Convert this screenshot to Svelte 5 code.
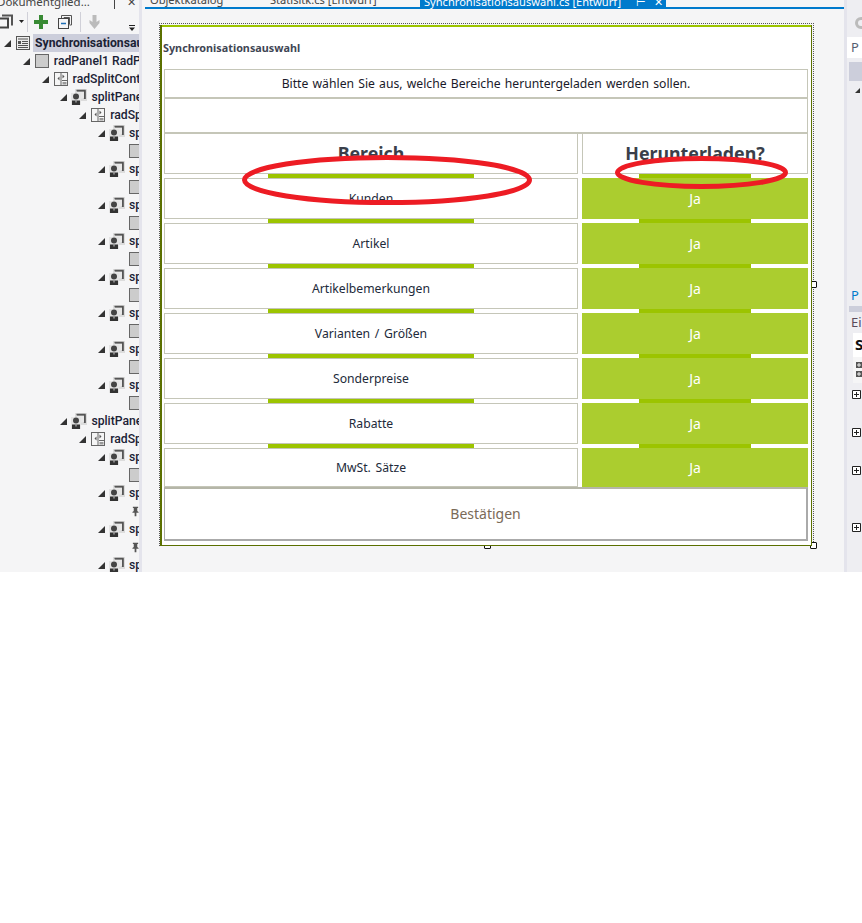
<script>
  const tree = [
    ['doc', 0, 'Synchronisationsauswahl', true],
    ['box', 1, 'radPanel1  RadPanel'],
    ['split', 2, 'radSplitContainer1'],
    ['pane', 3, 'splitPanel1'],
    ['split', 4, 'radSplitContainer2'],
    ['pane', 5, 'splitPanel3'], ['box', 6, ''],
    ['pane', 5, 'splitPanel4'], ['box', 6, ''],
    ['pane', 5, 'splitPanel5'], ['box', 6, ''],
    ['pane', 5, 'splitPanel6'], ['box', 6, ''],
    ['pane', 5, 'splitPanel7'], ['box', 6, ''],
    ['pane', 5, 'splitPanel8'], ['box', 6, ''],
    ['pane', 5, 'splitPanel9'], ['box', 6, ''],
    ['pane', 5, 'splitPanel10'], ['box', 6, ''],
    ['pane', 3, 'splitPanel2'],
    ['split', 4, 'radSplitContainer3'],
    ['pane', 5, 'splitPanel11'], ['box', 6, ''],
    ['pane', 5, 'splitPanel12'], ['pin', 6, ''],
    ['pane', 5, 'splitPanel13'], ['pin', 6, ''],
    ['pane', 5, 'splitPanel14']
  ];

  const areas = ['Kunden', 'Artikel', 'Artikelbemerkungen', 'Varianten / Größen', 'Sonderpreise', 'Rabatte', 'MwSt. Sätze'];
</script>

{#snippet icon(type)}
  {#if type === 'doc'}
    <svg width="14" height="14" viewBox="0 0 14 14">
      <rect x=".5" y=".5" width="13" height="13" fill="#eee" stroke="#555" />
      <path d="M2 3h10M6 5.500h6M6 7.500h6M2 9.500h10M2 11.500h10" stroke="#555" fill="none" />
      <rect x="2" y="5" width="3" height="3" fill="#555" />
    </svg>
  {:else if type === 'box'}
    <svg width="14" height="14" viewBox="0 0 14 14">
      <rect x=".5" y=".5" width="13" height="13" fill="#ccc" stroke="#666" />
    </svg>
  {:else if type === 'split'}
    <svg width="14" height="14" viewBox="0 0 14 14">
      <rect x=".5" y=".5" width="13" height="13" fill="#f5f5f5" stroke="#666" />
      <path d="M7 .5v13M8 8.500h5.500" stroke="#666" fill="none" />
      <path d="M5.500 4.500v4l-2-2zM8.500 2.500v4l2-2z" fill="#555" />
      <rect x="8.500" y="10" width="4" height="2.500" fill="#999" />
    </svg>
  {:else if type === 'pane'}
    <svg width="16" height="16" viewBox="0 0 16 16">
      <path d="M4 0h12v12H4z" fill="#dcdcdc" />
      <path d="M6 2.500h7.500V10" fill="none" stroke="#555" stroke-width="1.500" />
      <path d="M6 2.500h7v7H6z" fill="#e8e8e8" />
      <path d="M5.500 1.500h8.500v8.500" fill="none" stroke="#555" stroke-width="1.500" />
      <rect x="0" y="4" width="10" height="12" fill="#e4e4e4" />
      <circle cx="5" cy="7.500" r="3" fill="#444" />
      <path d="M1 16v-4.500h8V16z" fill="#333" />
      <path d="M5 11.500v2" stroke="#ccc" />
    </svg>
  {:else if type === 'pin'}
    <svg width="7" height="11" viewBox="0 0 8 11">
      <path d="M1 0h6v1.500H6V5l1.500 1v1H5v4H3V7H.5V6L2 5V1.500H1z" fill="#555" />
    </svg>
  {/if}
{/snippet}

{#snippet bar()}
  <svg class="plusbox" width="9" height="9" viewBox="0 0 9 9">
    <path d="M.5.500h8v8h-8zM2 4.500h5M4.500 2v5" fill="#fff" stroke="#222" />
  </svg>
{/snippet}

<div class="shell">
  <aside class="outline">
    <div class="paneltitle"><span>Dokumentglied...</span><b class="title-pin"></b><b class="title-close">✕</b></div>
    <div class="toolbar">
      <svg class="tool-first" width="17" height="16" viewBox="0 0 17 16">
        <path d="M4 1.500h10v10" fill="none" stroke="#555" stroke-width="2" />
        <rect x="1" y="4.500" width="9" height="9" fill="none" stroke="#444" stroke-width="2" />
      </svg>
      <svg class="caret" width="5" height="3" viewBox="0 0 5 3"><path d="M0 0h5L2.500 3z" fill="#222" /></svg>
      <i class="sep"></i>
      <svg class="plus" width="14" height="14" viewBox="0 0 14 14">
        <path d="M5 0h4v5h5v4H9v5H5V9H0V5h5z" fill="#388a34" />
      </svg>
      <svg class="collapse" width="14" height="14" viewBox="0 0 14 14">
        <path d="M3.500 3V.5h10v9.500h-2M6 3V2.500h5.500v7" fill="none" stroke="#555" />
        <rect x=".5" y="3.500" width="10" height="10" fill="#f5f5f7" stroke="#444" />
        <path d="M3 8.500h5" stroke="#1e6fb5" stroke-width="1.500" />
      </svg>
      <i class="sep sep-two"></i>
      <svg class="down" width="11" height="14" viewBox="0 0 11 14">
        <path d="M3.500 0h4v7l3-2v3l-5 6-5-6V5l3 2z" fill="#bbb" />
      </svg>
      <svg class="overflow" width="6" height="6" viewBox="0 0 6 6">
        <path d="M0 0h6v1H0zM0 2.500h6L3 6z" fill="#222" />
      </svg>
    </div>
    <div class="tree">
      {#each tree as [type, level, label, selected]}
        <div class="node" style="padding-left: {level * 18.8 + 4}px">
          <svg class="twist" class:hidden={level === 6} width="7" height="7" viewBox="0 0 7 7"><path d="M7 0v7H0z" fill="#333" /></svg>
          <span class="nodeicon">{@render icon(type)}</span>
          {#if label}<span class="nodelabel" class:selected>{label}</span>{/if}
        </div>
      {/each}
    </div>
  </aside>

  <main class="editor">
    <div class="tabs">
      <span class="tab first">Objektkatalog</span>
      <span class="tab second">Statisitk.cs [Entwurf]</span>
      <span class="tab active">Synchronisationsauswahl.cs [Entwurf]<b class="tab-pin">⊢</b><b>✕</b></span>
    </div>
    <div class="canvas">
      <div class="selection">
        <i class="handle right"></i>
        <i class="handle bottom"></i>
        <i class="handle corner"></i>
        <div class="form">
          <h1>Synchronisationsauswahl</h1>
          <div class="wide intro">Bitte wählen Sie aus, welche Bereiche heruntergeladen werden sollen.</div>
          <div class="wide spacer"></div>
          <div class="grid">
            <div class="head">Bereich</div>
            <div class="head">Herunterladen?</div>
            {#each areas as area, i}
              <div class="cell">
                <i class="slot area"></i>
                <div class="box" class:last={i === areas.length - 1}>{area}</div>
              </div>
              <div class="cell">
                <i class="slot answer"></i>
                <div class="box yes" class:last={i === areas.length - 1}>Ja</div>
              </div>
            {/each}
          </div>
          <div class="confirm">Bestätigen</div>

          <svg class="marks" width="650" height="60" viewBox="0 0 650 60">
            <ellipse cx="226" cy="24" rx="142.500" ry="22.500" />
            <ellipse cx="540.500" cy="16.500" rx="84" ry="14" />
          </svg>
        </div>
      </div>
    </div>
  </main>

  <aside class="side">
    <div class="side-top"><i class="search"></i></div>
    <div class="side-field">P</div>
    <div class="side-selected"></div>
    <svg class="side-twist" width="5" height="5" viewBox="0 0 5 5"><path d="M5 0v5H0z" fill="#333" /></svg>
    <div class="side-link">P</div>
    <div class="side-strip"></div>
    <div class="side-ei">Ei</div>
    <div class="side-head">S</div>
    <div class="side-tools">
      <svg width="6" height="6" viewBox="0 0 6 6"><path d="M0 0h6v6H0z" fill="#555" /><path d="M1 3h4M3 1v4" stroke="#eee" /></svg>
      <svg width="6" height="6" viewBox="0 0 6 6"><path d="M0 0h6v6H0z" fill="#555" /><path d="M1 3h4M3 1v4" stroke="#eee" /></svg>
    </div>
    <div class="side-groups">
      <div class="grp" style="height: 38px">{@render bar()}</div>
      <div class="grp" style="height: 38px">{@render bar()}</div>
      <div class="grp" style="height: 57px">{@render bar()}</div>
      <div class="grp">{@render bar()}</div>
    </div>
  </aside>
</div>

<style>
  :global(body) {
    background: #fff;
  }

  .shell {
    display: flex;
    height: 572px;
    overflow: hidden;
    background: #f5f5f6;
    font-family: "Noto Sans", "Open Sans", sans-serif;
    color: #1e1e1e;
  }

  .outline {
    flex: none;
    width: 139px;
    margin-right: 3px;
    border-right: 3px solid #e4e4ec;
    box-sizing: content-box;
    overflow: hidden;
  }

  .paneltitle {
    height: 9px;
    overflow: hidden;
    display: flex;
    align-items: flex-end;
    font-size: 11.5px;
    line-height: 15px;
    color: #444;
  }

  .paneltitle span {
    margin-left: -3px;
    white-space: nowrap;
  }

  .title-pin {
    flex: none;
    width: 1px;
    height: 9px;
    margin-left: 24px;
    background: #444;
  }

  .title-close {
    margin-left: 12px;
    font-weight: 400;
    font-size: 11px;
  }

  .toolbar {
    height: 25px;
    display: flex;
    align-items: center;
  }

  .tool-first {
    margin-left: -2px;
  }

  .caret {
    margin-left: 4px;
  }

  .sep {
    width: 1px;
    height: 20px;
    background: #d0d0d8;
    margin-left: 3px;
  }

  .plus {
    margin-left: 6px;
  }

  .collapse {
    margin-left: 10px;
  }

  .sep-two {
    margin-left: 8px;
  }

  .down {
    margin-left: 8px;
  }

  .overflow {
    margin-left: auto;
    margin-right: 4px;
    align-self: flex-end;
    margin-bottom: 3px;
  }

  .tree {
    display: flex;
    flex-direction: column;
  }

  .node {
    height: 18px;
    display: flex;
    align-items: center;
    white-space: nowrap;
    font-family: Roboto, "Noto Sans", sans-serif;
    font-size: 12.2px;
    font-weight: 500;
    color: #1b2235;
  }

  .twist {
    flex: none;
    width: 7px;
    margin-right: 4px;
  }

  .twist.hidden {
    visibility: hidden;
  }

  .nodeicon {
    flex: none;
    display: flex;
    width: 16px;
    justify-content: center;
    margin-right: 2px;
  }

  .nodelabel {
    padding: 0 2px;
    line-height: 18px;
  }

  .nodelabel.selected {
    background: #cccedb;
    flex: 1;
    font-weight: 700;
  }

  .editor {
    flex: none;
    width: 699px;
    display: flex;
    flex-direction: column;
  }

  .tabs {
    height: 9px;
    display: flex;
    align-items: flex-end;
    background: linear-gradient(#f5f5f6 7px, #007acc 7px);
    overflow: hidden;
    font-size: 11.1px;
    line-height: 15px;
  }

  .tab {
    white-space: nowrap;
    padding-left: 4px;
    height: 9px;
    display: flex;
    align-items: flex-end;
    overflow: hidden;
    color: #444;
    box-sizing: border-box;
    padding-bottom: 2px;
  }

  .tab.first {
    width: 121px;
    padding-left: 5px;
  }

  .tab.second {
    width: 154px;
  }

  .tab.active {
    width: 246px;
    background: #007acc;
    color: #fff;
    padding-bottom: 0;
  }

  .tab b {
    font-weight: 400;
    margin-left: 8px;
    font-size: 11px;
  }

  .tab b.tab-pin {
    margin-left: 15px;
  }

  .canvas {
    flex: 1;
    padding: 14px 0 0 14px;
  }

  .selection {
    position: relative;
    width: 655px;
    height: 523px;
    box-sizing: border-box;
    border: 1px dotted #555;
    background: #f5f5f6;
  }

  .handle {
    position: absolute;
    width: 5px;
    height: 5px;
    background: #fff;
    border: 1px solid #111;
    border-radius: 1px;
  }

  .handle.right {
    right: -4px;
    top: 257px;
  }

  .handle.bottom {
    left: 324px;
    bottom: -4px;
  }

  .handle.corner {
    right: -4px;
    bottom: -4px;
  }

  .form {
    position: relative;
    box-sizing: border-box;
    height: 521px;
    margin-top: 1px;
    border: 1px solid #5b7000;
    border-top: 0;
    background: #fff;
    padding: 0 2px;
    width: 652px;
    border-left-width: 2px;
    box-shadow: inset 0 2px 0 #9cc400;
  }

  h1 {
    margin: 0;
    padding-top: 15px;
    height: 29px;
    font-size: 10.8px;
    line-height: 15px;
    font-weight: 700;
    color: #3f4654;
    white-space: nowrap;
    box-sizing: content-box;
    margin-left: -1px;
  }

  .wide {
    width: 644px;
    box-sizing: border-box;
    border: 1px solid #c5c6b8;
    border-bottom-width: 2px;
  }

  .intro {
    height: 30px;
    text-align: center;
    font-size: 12.2px;
    word-spacing: 1px;
    line-height: 28px;
    color: #1a1a2a;
  }

  .spacer {
    height: 35px;
    border-top: 0;
  }

  .grid {
    display: grid;
    grid-template-columns: 414px 226px;
    column-gap: 4px;
    width: 644px;
  }

  .head {
    height: 40px;
    box-sizing: border-box;
    border: 1px solid #c5c6b8;
    border-top: 0;
    text-align: center;
    font-size: 17.8px;
    font-weight: 700;
    line-height: 38px;
    color: #3a3f4a;
  }

  .cell {
    display: flex;
    flex-direction: column;
    align-items: center;
  }

  .slot {
    display: block;
    height: 4px;
    background: #9cc400;
  }

  .slot.area {
    width: 206px;
  }

  .slot.answer {
    width: 112px;
  }

  .box {
    width: 100%;
    height: 41px;
    box-sizing: border-box;
    border: 1px solid #c5c6b8;
    display: flex;
    align-items: center;
    justify-content: center;
    font-size: 12.2px;
    word-spacing: 1.500px;
    color: #222a3a;
  }

  .box.last {
    height: 39px;
  }

  .box.yes {
    border: 0;
    background: #abcd2f;
    color: #fff;
    font-size: 14px;
  }

  .confirm {
    width: 644px;
    height: 54px;
    box-sizing: border-box;
    border: 1px solid #aaa;
    border-top: 2px solid #b5b6a8;
    border-bottom-width: 2px;
    border-right-width: 2px;
    display: flex;
    align-items: center;
    justify-content: center;
    padding-bottom: 2px;
    font-size: 14px;
    color: #7a6a58;
  }

  .marks {
    position: absolute;
    left: -1px;
    top: 131px;
    overflow: visible;
    pointer-events: none;
  }

  .marks ellipse {
    fill: none;
    stroke: #ed1c24;
    stroke-width: 5;
  }

  .side {
    flex: none;
    width: 18px;
    border-left: 3px solid #e4e4ec;
    box-sizing: border-box;
    background: #eeeef2;
    display: flex;
    flex-direction: column;
    font-size: 13px;
    overflow: hidden;
  }

  .side-top {
    height: 37px;
    padding: 17px 0 0 8px;
    box-sizing: border-box;
  }

  .search {
    display: block;
    width: 12px;
    height: 12px;
    box-sizing: border-box;
    border: 3px solid #bbb;
    border-radius: 50%;
  }

  .side-field {
    height: 21px;
    background: #fff;
    line-height: 21px;
    padding-left: 4px;
    color: #555d70;
  }

  .side-selected {
    height: 19px;
    margin: 4px 0 0 2px;
    background: #cccedb;
  }

  .side-twist {
    margin: 7px 0 0 8px;
    flex: none;
  }

  .side-link {
    margin-top: 194px;
    height: 16px;
    line-height: 16px;
    padding-left: 4px;
    color: #007acc;
  }

  .side-strip {
    height: 6px;
    margin: 3px 0 0 2px;
    flex: none;
    background: #cccedb;
  }

  .side-ei {
    height: 21px;
    line-height: 21px;
    padding-left: 4px;
    color: #5a4a5a;
  }

  .side-head {
    height: 24px;
    margin-left: 6px;
    padding-left: 2px;
    background: #fff;
    line-height: 22px;
    font-size: 15px;
    font-weight: 700;
    color: #111;
  }

  .side-tools {
    height: 26px;
    margin-left: 6px;
    padding: 5px 0 0 3px;
    box-sizing: border-box;
    display: flex;
    flex-direction: column;
    gap: 3px;
    background: #f5f5f6;
  }

  .side-groups {
    padding: 7px 0 0 5px;
  }

  .grp {
    height: 38px;
  }

  .plusbox {
    display: block;
  }
</style>
